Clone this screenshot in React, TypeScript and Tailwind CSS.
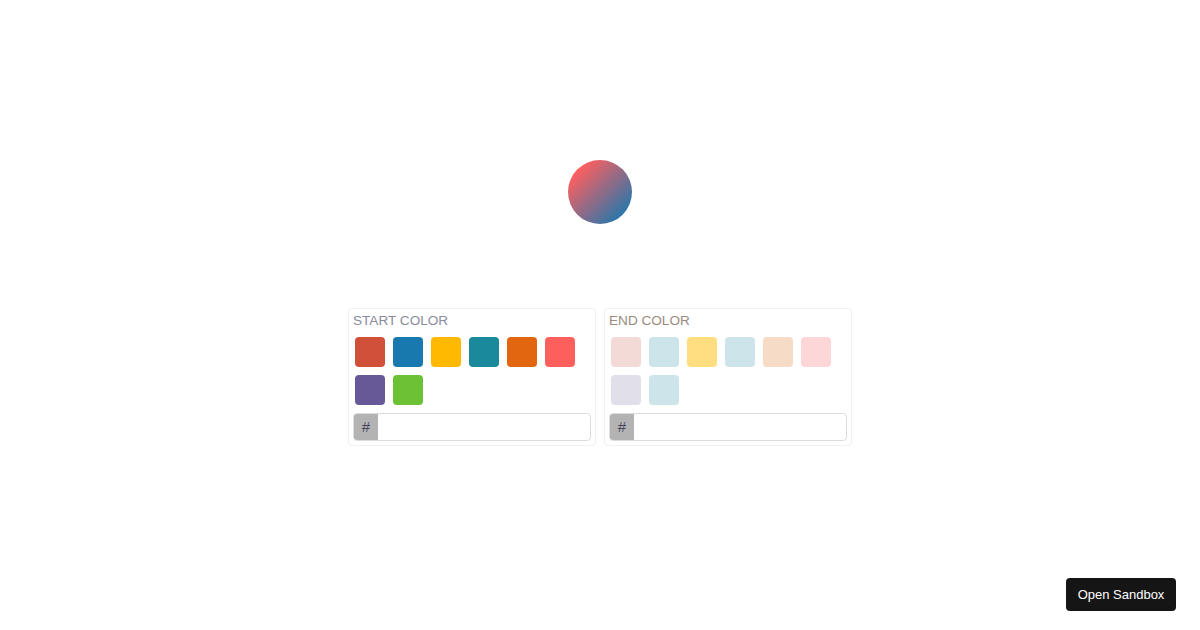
import React from 'react';

const START_COLORS = ['#d0503a', '#1779ad', '#ffb900', '#1b899c', '#e26610', '#fd5f5c', '#675997', '#6cc135'];
const END_COLORS = ['#f4dad6', '#cde5ea', '#ffdd80', '#cde5ea', '#f6dbc6', '#fdd6d8', '#e1dfea', '#cde5ea'];

interface PickerProps {
    label: string;
    labelColor: string;
    colors: string[];
}

const ColorPicker: React.FC<PickerProps> = ({ label, labelColor, colors }) => (
    <div className="w-[248px] border border-[#f0f0f0] rounded-[4px] px-1 pt-1 pb-1 bg-white">
        <div className={`h-4 leading-4 text-[13.6px] uppercase ${labelColor}`}>{label}</div>
        {/* Swatches */}
        <div className="mt-2 pl-[2px] flex flex-wrap gap-2">
            {colors.map((c, i) => (
                <div key={i} className="w-[30px] h-[30px] rounded-[4px]" style={{ backgroundColor: c }} />
            ))}
        </div>
        {/* Hex input */}
        <div className="mt-2 h-[28px] flex border border-[#dcdcdc] rounded-[4px] overflow-hidden">
            <div className="w-[24px] bg-[#b3b3b3] flex items-center justify-center text-[15px] text-[#4a4560]">#</div>
            <input className="flex-1 outline-none px-2 text-[13px] text-gray-700" />
        </div>
    </div>
);

export default function App() {
    return (
        <div className="relative w-[1200px] h-[630px] bg-white font-['Liberation_Sans',Arial,sans-serif] flex flex-col items-center pt-[160px]">
            <div className="w-16 h-16 rounded-full bg-[linear-gradient(135deg,#ff5f5f_15%,#2c76aa_85%)]" />
            <div className="mt-[84px] flex gap-2">
                <ColorPicker label="Start Color" labelColor="text-[#8a8b9c]" colors={START_COLORS} />
                <ColorPicker label="End Color" labelColor="text-[#9a8b80]" colors={END_COLORS} />
            </div>
            <button className="absolute right-6 bottom-[19px] w-[110px] h-[33px] rounded-[4px] bg-[#151515] text-white text-[13px]">
                Open Sandbox
            </button>
        </div>
    );
}
